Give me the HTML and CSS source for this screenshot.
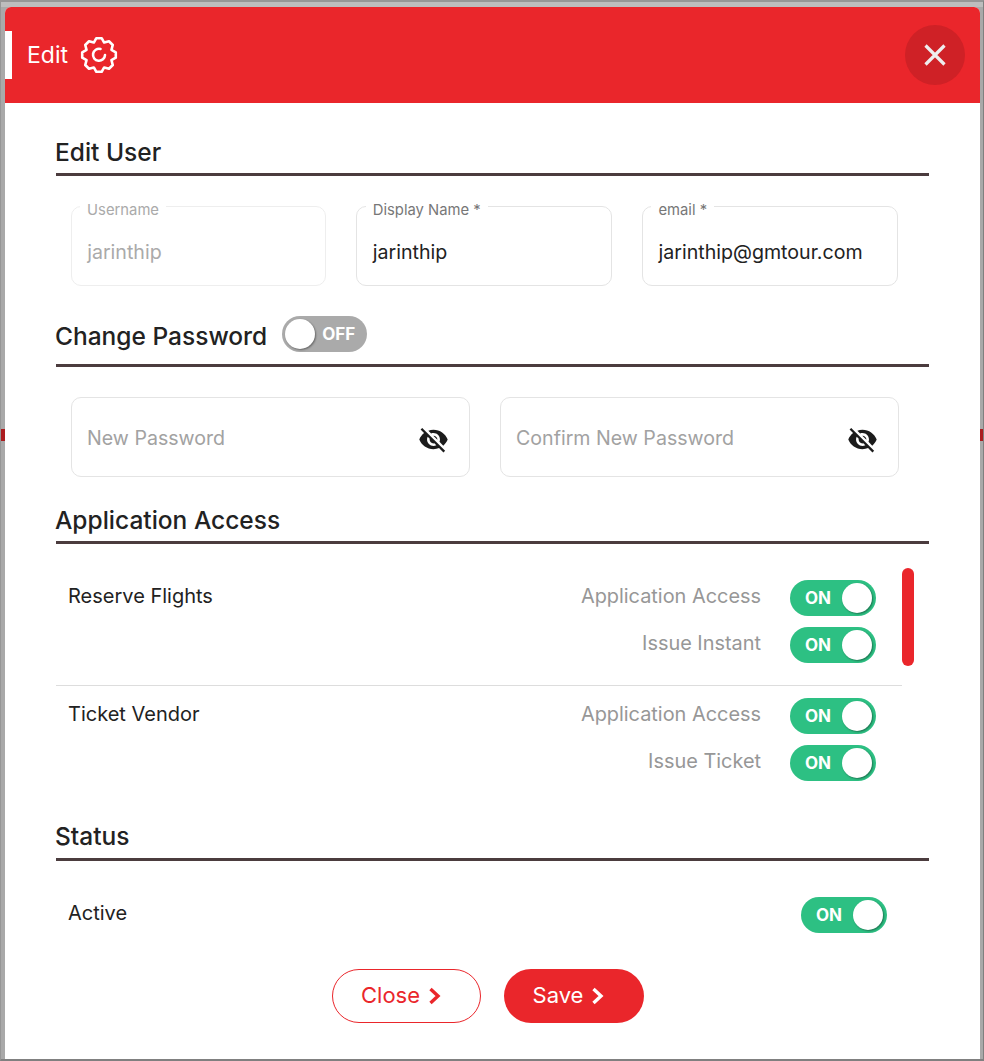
FILE: index.html
```html
<!DOCTYPE html>
<html lang="en">
<head>
  <meta charset="UTF-8">
  <meta name="viewport" content="width=device-width, initial-scale=1.0">
  <title>Edit User</title>
  <link rel="stylesheet" href="styles.css">
</head>
<body>

  <!-- bits of the page behind the dialog -->
  <div class="behind-top"></div>
  <div class="behind-bar behind-left"></div>
  <div class="behind-bar behind-right"></div>

  <div class="modal">
    <div class="modal-header">
      <div class="behind-white"></div>
      <span class="modal-title">Edit</span>
      <svg class="gear" viewBox="-20 -20 40 40" width="40" height="40">
        <polygon points="-2.66,-16.79 2.66,-16.79 5.17,-12.47 9.99,-13.75 13.75,-9.99 12.47,-5.17 16.79,-2.66 16.79,2.66 12.47,5.17 13.75,9.99 9.99,13.75 5.17,12.47 2.66,16.79 -2.66,16.79 -5.17,12.47 -9.99,13.75 -13.75,9.99 -12.47,5.17 -16.79,2.66 -16.79,-2.66 -12.47,-5.17 -13.75,-9.99 -9.99,-13.75 -5.17,-12.47"/>
        <path d="M1.5 -6 A6 6 0 1 0 6 0"/>
      </svg>
      <button class="close-x">
        <svg viewBox="0 0 24 24" width="24" height="24"><path d="M2.5 2.5 L21.5 21.5 M21.5 2.5 L2.5 21.5"/></svg>
      </button>
    </div>

    <div class="modal-body">
      <div class="section-title">Edit User</div>
      <div class="fields fields-3">
        <div class="field disabled">
          <label>Username</label>
          <span class="field-value">jarinthip</span>
        </div>
        <div class="field">
          <label>Display Name *</label>
          <span class="field-value">jarinthip</span>
        </div>
        <div class="field">
          <label>email *</label>
          <span class="field-value">jarinthip@gmtour.com</span>
        </div>
      </div>

      <div class="section-title title-password">
        Change Password
        <div class="toggle off"><span class="knob"></span><span class="toggle-text">OFF</span></div>
      </div>
      <div class="fields fields-2">
        <div class="field">
          <span class="placeholder">New Password</span>
          <svg class="eye" viewBox="0 0 24 24" width="31" height="31"><path d="M12 7c2.76 0 5 2.24 5 5 0 .65-.13 1.26-.36 1.83l2.92 2.92c1.51-1.26 2.7-2.89 3.43-4.75-1.73-4.39-6-7.5-11-7.5-1.4 0-2.74.25-3.98.7l2.16 2.16C10.74 7.13 11.35 7 12 7zM2 4.27l2.28 2.28.46.46C3.08 8.3 1.78 10.02 1 12c1.73 4.39 6 7.5 11 7.5 1.55 0 3.03-.3 4.38-.84l.42.42L19.73 22 21 20.73 3.27 3 2 4.27zM7.53 9.8l1.55 1.55c-.05.21-.08.43-.08.65 0 1.66 1.34 3 3 3 .22 0 .44-.03.65-.08l1.55 1.55c-.67.33-1.41.53-2.2.53-2.76 0-5-2.24-5-5 0-.79.2-1.53.53-2.2zm4.31-.78l3.15 3.15.02-.16c0-1.66-1.34-3-3-3l-.17.01z"/></svg>
        </div>
        <div class="field">
          <span class="placeholder">Confirm New Password</span>
          <svg class="eye" viewBox="0 0 24 24" width="31" height="31"><path d="M12 7c2.76 0 5 2.24 5 5 0 .65-.13 1.26-.36 1.83l2.92 2.92c1.51-1.26 2.7-2.89 3.43-4.75-1.73-4.39-6-7.5-11-7.5-1.4 0-2.74.25-3.98.7l2.16 2.16C10.74 7.13 11.35 7 12 7zM2 4.27l2.28 2.28.46.46C3.08 8.3 1.78 10.02 1 12c1.73 4.39 6 7.5 11 7.5 1.55 0 3.03-.3 4.38-.84l.42.42L19.73 22 21 20.73 3.27 3 2 4.27zM7.53 9.8l1.55 1.55c-.05.21-.08.43-.08.65 0 1.66 1.34 3 3 3 .22 0 .44-.03.65-.08l1.55 1.55c-.67.33-1.41.53-2.2.53-2.76 0-5-2.24-5-5 0-.79.2-1.53.53-2.2zm4.31-.78l3.15 3.15.02-.16c0-1.66-1.34-3-3-3l-.17.01z"/></svg>
        </div>
      </div>

      <div class="section-title title-access">Application Access</div>
      <div class="access-list">
        <div class="scroll-thumb"></div>
        <div class="app-row first">
          <div class="app-name">Reserve Flights</div>
          <div class="app-perms">
            <div class="perm"><span>Application Access</span><div class="toggle on"><span class="toggle-text">ON</span><span class="knob"></span></div></div>
            <div class="perm"><span>Issue Instant</span><div class="toggle on"><span class="toggle-text">ON</span><span class="knob"></span></div></div>
          </div>
        </div>
        <div class="app-row second">
          <div class="app-name">Ticket Vendor</div>
          <div class="app-perms">
            <div class="perm"><span>Application Access</span><div class="toggle on"><span class="toggle-text">ON</span><span class="knob"></span></div></div>
            <div class="perm"><span>Issue Ticket</span><div class="toggle on"><span class="toggle-text">ON</span><span class="knob"></span></div></div>
          </div>
        </div>
      </div>

      <div class="section-title title-status">Status</div>
      <div class="status-row">
        <div class="app-name">Active</div>
        <div class="toggle on"><span class="toggle-text">ON</span><span class="knob"></span></div>
      </div>

      <div class="buttons">
        <button class="btn btn-close">Close <svg viewBox="0 0 13 18" width="13" height="18"><path d="M2.5 2 L10 9 L2.5 16"/></svg></button>
        <button class="btn btn-save">Save <svg viewBox="0 0 13 18" width="13" height="18"><path d="M2.5 2 L10 9 L2.5 16"/></svg></button>
      </div>
    </div>
  </div>

</body>
</html>
```

FILE: styles.css
```css
* {
  box-sizing: border-box;
}

html {
  background-color: #a9a9a9;
}

body {
  position: relative;
  margin: 0;
  width: 984px;
  height: 1061px;
  overflow: hidden;
  padding: 5px 0 0 4px;
  font-family: Inter, "Noto Sans", sans-serif;
  color: #222;
  background-color: #a9a9a9;
  border-top: 2px solid #969696;
  border-right: 1px solid #808080;
  border-bottom: 2px solid #808080;
  border-left: 1px solid #969696;
}

.behind-top {
  position: absolute;
  top: 0;
  left: 0;
  width: 100%;
  height: 5px;
  background-color: #bdbdbd;
}

.behind-bar {
  position: absolute;
  top: 427px;
  height: 12px;
  background-color: #ab1c1f;
}

.behind-left {
  left: 0;
  width: 4px;
}

.behind-right {
  left: 979px;
  width: 3px;
}

.modal {
  position: relative;
  width: 975px;
  height: 1052px;
  background-color: #fff;
  border-radius: 6px 6px 0 0;
  overflow: hidden;
}

.modal-header {
  position: relative;
  display: flex;
  align-items: center;
  height: 96px;
  padding-left: 22px;
  background-color: #ea262b;
  color: #fff;
}

.behind-white {
  position: absolute;
  left: 0;
  top: 24px;
  width: 7px;
  height: 48px;
  background-color: #fff;
}

.modal-title {
  font-size: 23px;
  margin-right: 11px;
}

.gear {
  fill: none;
  stroke: #fff;
  stroke-width: 2.6;
  stroke-linejoin: round;
  stroke-linecap: round;
}

.close-x {
  display: flex;
  align-items: center;
  justify-content: center;
  width: 60px;
  height: 60px;
  margin-left: auto;
  margin-right: 15px;
  padding: 0;
  border: none;
  border-radius: 50%;
  background-color: #cf2126;
}

.close-x svg {
  fill: none;
  stroke: #eee;
  stroke-width: 3.2;
}

.modal-body {
  padding: 31px 51px 0;
}

.section-title {
  display: flex;
  align-items: center;
  font-size: 24.5px;
  font-weight: 500;
  line-height: 36px;
  text-indent: -1px;
  padding-bottom: 3px;
  border-bottom: 3px solid #4b3c3e;
}

.title-password {
  margin-top: 32px;
  padding-bottom: 10px;
}

.title-access {
  margin-top: 25px;
}

.title-status {
  margin-top: 37px;
  padding-bottom: 4px;
}

.fields {
  display: grid;
  column-gap: 30px;
}

.fields-3 {
  grid-template-columns: repeat(3, 1fr);
  width: 841.6px;
  margin-top: 30px;
  padding-left: 14.6px;
}

.fields-2 {
  grid-template-columns: repeat(2, 1fr);
  width: 843px;
  margin-top: 30px;
  padding-left: 15px;
}

.field {
  position: relative;
  display: flex;
  align-items: center;
  justify-content: space-between;
  height: 80px;
  padding: 0 20px 0 15px;
  border: 1px solid #e4e4e4;
  border-radius: 10px;
  font-size: 19.6px;
}

.field-value {
  padding-top: 12px;
  margin-left: 0.6px;
}

.field label {
  position: absolute;
  top: -5px;
  left: 8.5px;
  padding: 0 7px;
  background-color: #fff;
  font-size: 14.8px;
  line-height: 16px;
  color: #777;
}

.disabled {
  border-color: #eee;
  color: #aaa;
}

.disabled label {
  color: #aaa;
}

.placeholder {
  padding-top: 2px;
  color: #a2a2a2;
}

.eye {
  fill: #1c1c1c;
  margin-top: 5px;
}

.toggle {
  position: relative;
  display: flex;
  align-items: center;
  width: 86px;
  height: 36px;
  border-radius: 18px;
  font-size: 17px;
  font-weight: 700;
  text-indent: 0;
  color: #fff;
}

.toggle.on {
  justify-content: space-between;
  padding: 0 4px 0 15px;
  background-color: #2dc083;
}

.toggle.off {
  width: 85px;
  margin-left: 15px;
  margin-top: -4px;
  padding: 0 3px;
  background-color: #aaa;
}

.toggle-text {
  line-height: 36px;
}

.toggle.off .toggle-text {
  margin-left: 7px;
}

.knob {
  width: 30px;
  height: 30px;
  border-radius: 50%;
  background-color: #fff;
  box-shadow: 1px 1px 2px rgba(0, 0, 0, 0.4);
}

.access-list {
  position: relative;
}

.scroll-thumb {
  position: absolute;
  top: 24px;
  left: 846px;
  width: 12px;
  height: 98px;
  border-radius: 6px;
  background-color: #ea262b;
}

.app-row {
  display: flex;
  justify-content: space-between;
  width: 846px;
  padding-left: 12px;
  padding-right: 26px;
}

.app-row.first {
  padding-top: 36px;
  padding-bottom: 22px;
  border-bottom: 1px solid #ddd;
}

.app-row.second {
  padding-top: 12px;
}

.app-name {
  font-size: 20px;
  line-height: 32px;
}

.app-perms {
  display: flex;
  flex-direction: column;
  gap: 11px;
}

.perm {
  display: flex;
  align-items: center;
  justify-content: flex-end;
  gap: 29px;
  font-size: 19.9px;
  color: #979797;
}

.perm > span {
  padding-bottom: 4px;
}

.status-row {
  display: flex;
  align-items: flex-start;
  justify-content: space-between;
  margin-top: 36px;
  padding: 0 42px 0 12px;
}

.buttons {
  display: flex;
  justify-content: center;
  gap: 23px;
  margin-top: 36px;
  padding-right: 9px;
}

.btn {
  display: flex;
  align-items: center;
  justify-content: center;
  gap: 8px;
  height: 54px;
  padding: 0 11px 2px 0;
  border-radius: 27px;
  font-family: inherit;
  font-size: 22px;
  cursor: pointer;
}

.btn svg {
  fill: none;
  stroke: currentColor;
  stroke-width: 3.4;
  margin-top: 2px;
}

.btn-close {
  width: 149px;
  border: 1px solid #ea262b;
  background-color: #fff;
  color: #ea262b;
}

.btn-save {
  width: 140px;
  border: none;
  background-color: #ea262b;
  color: #fff;
}
```
